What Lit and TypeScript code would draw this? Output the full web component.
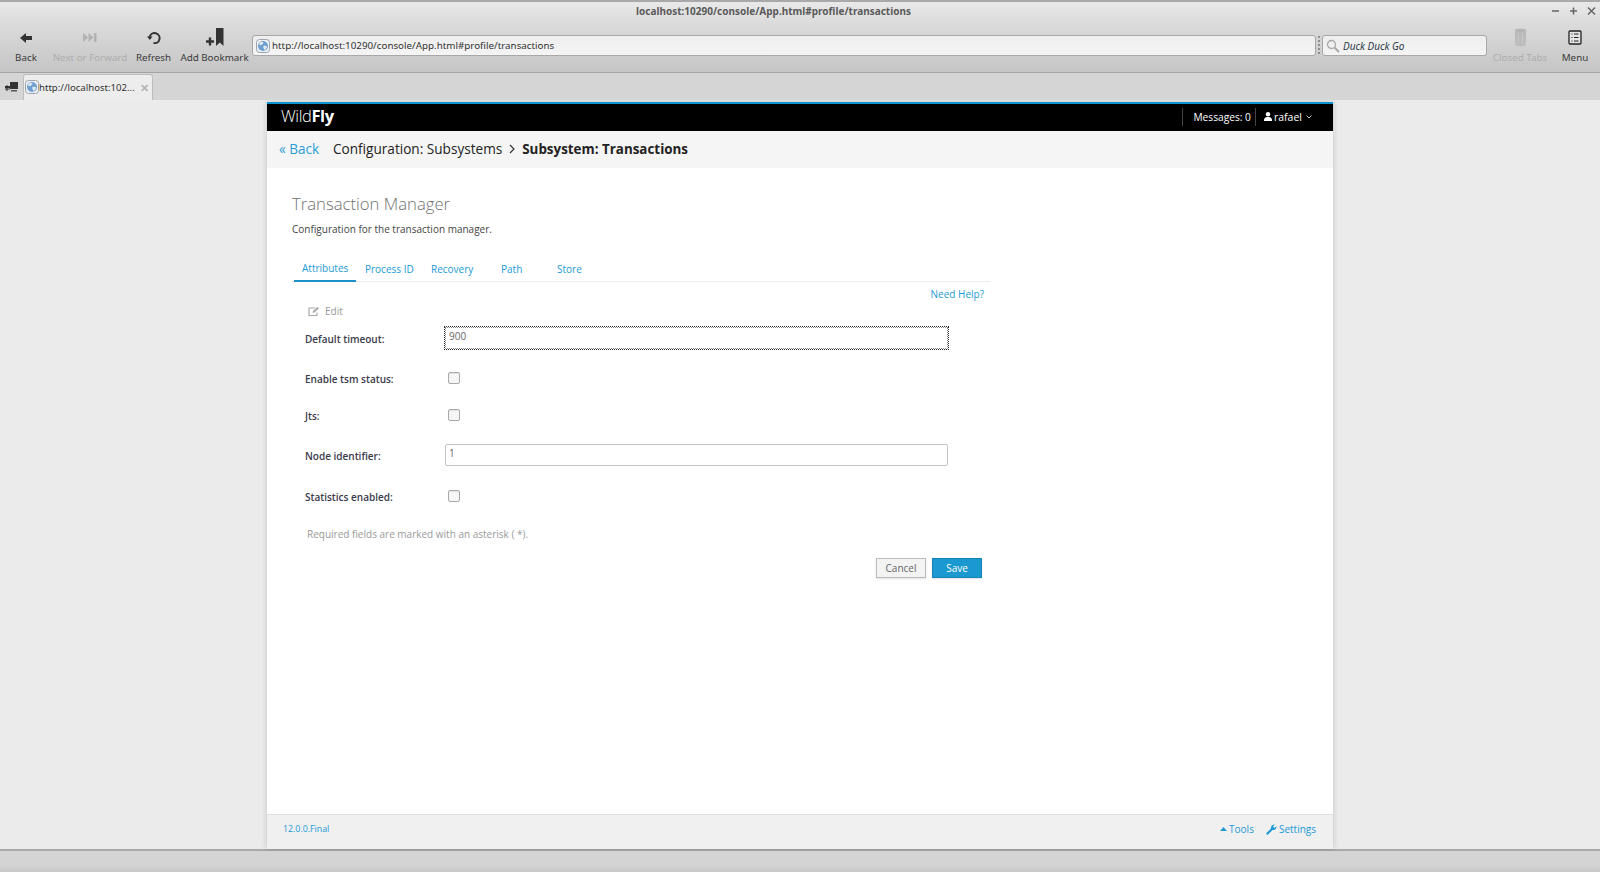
import { LitElement, html, css, svg } from "lit";
import { customElement } from "lit/decorators.js";

const globe = svg`<svg class="globe" width="14" height="14" viewBox="0 0 14 14"><rect x=".5" y=".5" width="13" height="13" rx="3" fill="#eef0f2" stroke="#9aa3ad"/><circle cx="7" cy="7" r="5" fill="#6f9fd0"/><path d="M4 3.500c1.500-.8 3-.5 3.500 0 .3 1-1 1-1.500 2-.6 1.200-1.500.6-2.500.6-.4-1 0-2 .5-2.600zM7.500 7c1.500-.5 3 0 3.500.8-.3 1.500-1.500 3-2.500 3.200-.5-1.200-1.700-2.500-1-4z" fill="#e4ecf3"/></svg>`;

@customElement("app-root")
export class AppRoot extends LitElement {
  static styles = css`
    :host { display: block; width: 1600px; height: 872px; overflow: hidden; font-family: "Open Sans", "Noto Sans", sans-serif; background: #ebebeb; }
    * { box-sizing: border-box; }
    svg { flex: none; }
    .shell { height: 872px; display: flex; flex-direction: column; }
    .chrome { height: 73px; background: linear-gradient(#e9e9e9 0, #dcdcdc 20px, #c4c4c4 72px); border-top: 2px solid #a9a9a9; border-bottom: 1px solid #a4a4a4; position: relative; font-family: "Noto Sans", sans-serif; flex: none; }
    .title { height: 19px; text-align: center; font-size: 10px; line-height: 19px; font-weight: 700; color: #5a5a5a; padding-right: 53px; }
    .wm { position: absolute; right: 2px; top: 3px; display: flex; gap: 6px; }
    .toolbar { display: flex; height: 50px; align-items: flex-start; padding-top: 4px; position: relative; }
    .tool { display: flex; flex-direction: column; align-items: center; font-size: 9.800px; color: #3a3a3a; height: 44px; line-height: 15px; white-space: nowrap; flex: none; }
    .tool.dis { color: #adadad; }
    .tool .ico { height: 25px; display: flex; align-items: center; justify-content: center; }
    .back { width: 26px; margin-left: 13px; }
    .next { width: 76px; margin-left: 13px; }
    .refresh { width: 37px; margin-left: 7px; }
    .addbm { width: 69px; margin-left: 8px; }
    .field { height: 21px; margin-top: 10px; background: linear-gradient(#eee, #f4f4f4); border: 1px solid #a8a8a8; border-radius: 3px; display: flex; align-items: center; font-size: 10px; color: #333; }
    .url { width: 1064px; margin-left: 3px; padding-left: 3px; gap: 2px; flex: none; font-size: 9.800px; }
    .grip { width: 6px; display: flex; flex-direction: column; gap: 2px; align-items: center; margin-top: 11px; height: 20px; flex: none; }
    .grip i { width: 2px; height: 2px; background: #8e8e8e; }
    .search { width: 165px; padding-left: 3px; gap: 3px; font-style: italic; color: #2c3a48; flex: none; }
    .closed { width: 58px; margin-left: 4px; }
    .menu { width: 30px; margin-left: 11px; }
    .tabbar { height: 27px; background: #d5d5d5; display: flex; align-items: flex-end; flex: none; position: relative; }
    .tabicon { width: 23px; height: 26px; display: flex; align-items: center; justify-content: center; }
    .tab { width: 130px; height: 26px; background: #ededed; border: 1px solid #bdbdbd; border-bottom: none; border-radius: 3px 3px 0 0; display: flex; align-items: center; font-size: 9.600px; color: #333; padding: 0 0 1px 1px; gap: 0; font-family: "Noto Sans", sans-serif; white-space: nowrap; }
    .tab .x { margin-left: 5px; color: #b5b5b5; font-size: 11px; font-weight: 700; }
    .body { flex: 1; display: flex; justify-content: center; background: #ebebeb; border-bottom: 2px solid #a9a9a9; padding-top: 2px; }
    .page { width: 1066px; background: #fff; display: flex; flex-direction: column; box-shadow: 0 0 6px rgba(0,0,0,.18); }
    .masthead { height: 29px; background: #000; border-top: 2.500px solid #0d92cf; color: #fff; display: flex; align-items: center; flex: none; font-size: 10.200px; padding-left: 14px; }
    .logo { font-size: 16.500px; font-weight: 300; letter-spacing: -.4px; line-height: 1; margin-top: -3px; }
    .logo b { font-weight: 700; }
    .mh-right { margin-left: auto; display: flex; align-items: center; height: 20px; margin: -2px 21px 0 auto; }
    .mh-item { border-left: 1px solid #444; height: 18px; display: flex; align-items: center; white-space: nowrap; }
    .msg { padding: 0 4px 0 10px; }
    .usr { padding-left: 8px; gap: 2px; font-size: 10.500px; }
    .crumbs { height: 37px; background: #f5f5f5; display: flex; align-items: center; font-size: 13.600px; color: #222; flex: none; white-space: nowrap; padding-bottom: 2px; }
    .crumbs .bk { color: #2a9dd6; padding-left: 12px; width: 66px; }
    .crumbs .sep { margin: 0 7px; display: flex; }
    .crumbs b { font-weight: 700; font-size: 13.400px; }
    .content { flex: 1; padding: 25px 0 0 25px; }
    h1 { margin: 0; font-size: 16.700px; font-weight: 300; color: #707070; line-height: 22px; }
    .desc { font-size: 10px; color: #444; margin-top: 6px; line-height: 16px; }
    .tabs { display: flex; width: 699px; margin-top: 16px; border-bottom: 1px solid #ececec; height: 29px; font-size: 10px; color: #1c9ad6; position: relative; }
    .tabs span { position: absolute; bottom: 5px; white-space: nowrap; line-height: 14px; }
    .tabs .on { left: 2px; bottom: -1px; width: 62px; height: 28px; padding: 7px 0 0 8px; border-bottom: 2px solid #1c91c9; color: #1c9ad6; }
    .pane { width: 699px; }
    .help { text-align: right; font-size: 10px; color: #1c9ad6; padding-right: 7px; line-height: 14px; margin-top: 5px; }
    .edit { display: flex; align-items: center; gap: 5px; margin: 3px 0 0 16px; font-size: 10px; color: #999; height: 14px; }
    .form { margin: 9px 0 0 13px; display: grid; grid-template-columns: 140px 503px; align-items: center; font-size: 10px; color: #333; }
    .form label { line-height: 14px; font-weight: 600; color: #3a3a4a; padding-top: 2px; }
    .inp { height: 22px; border: 1px solid #c4c4c4; border-radius: 2px; padding: 0 3px; line-height: 17px; color: #666; background: #fff; }
    .inp.focus { outline: 1px dotted #222; border: 1px dotted #888; border-radius: 0; }
    .cb { width: 12px; height: 12px; border: 1px solid #a9a9a9; border-radius: 2px; margin-left: 3px; background: #f6f6f6; box-shadow: inset 0 1px 1px rgba(0,0,0,.08); }
    .sp { grid-column: 1 / 3; }
    .req { margin: 23px 0 0 15px; font-size: 10px; color: #9a9a9a; line-height: 14px; }
    .btns { display: flex; justify-content: flex-end; gap: 6px; margin-top: 17px; padding-right: 9px; }
    .btn { width: 50px; height: 20px; font-size: 10px; display: flex; align-items: center; justify-content: center; }
    .cancel { background: #f3f3f3; border: 1px solid #bbb; color: #666; box-shadow: 0 1px 2px rgba(0,0,0,.12); }
    .save { background: #1a98d0; border: 1px solid #1585b8; color: #fff; box-shadow: 0 1px 2px rgba(0,0,0,.12); }
    .foot { height: 35px; background: #f0f0f0; border-top: 1px solid #e0e0e0; display: flex; align-items: center; padding: 0 17px 6px 16px; font-size: 10px; color: #1c9ad6; flex: none; }
    .foot .ver { font-size: 8.800px; }
    .foot .r { margin-left: auto; display: flex; gap: 12px; }
    .foot .r span { display: flex; align-items: center; gap: 2px; }
    .status { height: 21px; background: linear-gradient(#d4d4d4, #d4d4d4 70%, #c8c8c8); flex: none; }
  `;

  render() {
    return html`<div class="shell">
      <div class="chrome">
        <div class="title">localhost:10290/console/App.html#profile/transactions</div>
        <div class="wm">
          <svg width="12" height="12" viewBox="0 0 12 12"><path d="M2 6h7" stroke="#666" stroke-width="1.500"/></svg>
          <svg width="12" height="12" viewBox="0 0 12 12"><path d="M2 6h7M5.500 2.500v7" stroke="#666" stroke-width="1.500"/></svg>
          <svg width="12" height="12" viewBox="0 0 12 12"><path d="M2 2.500l7 7M9 2.500l-7 7" stroke="#666" stroke-width="1.500"/></svg>
        </div>
        <div class="toolbar">
          <div class="tool back"><div class="ico"><svg width="12" height="10" viewBox="0 0 12 10"><path d="M0 5l6-5v3h6v4H6v3z" fill="#333"/></svg></div>Back</div>
          <div class="tool next dis"><div class="ico"><svg width="14" height="9" viewBox="0 0 14 9"><path d="M0 0l5 4.500L0 9zM5.500 0l5 4.500L5.500 9zM11 0h2.500v9H11z" fill="#b2b2b2"/></svg></div>Next or Forward</div>
          <div class="tool refresh"><div class="ico"><svg width="14" height="13" viewBox="0 0 14 13"><path d="M2.700 6A5 5 0 1 1 6.500 12" fill="none" stroke="#333" stroke-width="2"/><path d="M0 5.500h5.600L2.800 9z" fill="#333"/></svg></div>Refresh</div>
          <div class="tool addbm"><div class="ico"><svg width="18" height="19" viewBox="0 0 18 19"><path d="M10 0h7.500v18l-3.700-3.500L10 18z" fill="#333"/><path d="M0 13.500h8M4 9.500v8" stroke="#333" stroke-width="2.400"/></svg></div>Add Bookmark</div>
          <div class="field url">${globe}<span>http://localhost:10290/console/App.html#profile/transactions</span></div>
          <div class="grip"><i></i><i></i><i></i><i></i><i></i></div>
          <div class="field search"><svg width="14" height="14" viewBox="0 0 14 14"><circle cx="5.500" cy="5.500" r="4" fill="none" stroke="#a8a8a8" stroke-width="1.300"/><path d="M8.500 8.500l4.500 4.500" stroke="#a8a8a8" stroke-width="2"/></svg><span>Duck Duck Go</span></div>
          <div class="tool closed dis"><div class="ico"><svg width="13" height="19" viewBox="0 0 13 20"><ellipse cx="6.500" cy="2.500" rx="6" ry="2" fill="#b5b5b5"/><path d="M.5 3c1 1.500 11 1.500 12 0l-.6 15c-1 2-9.800 2-10.800 0z" fill="#bbb"/><path d="M4.500 6v11M8.500 6v11" stroke="#c9c9c9"/></svg></div>Closed Tabs</div>
          <div class="tool menu"><div class="ico"><svg width="14" height="15" viewBox="0 0 14 15"><rect x="1" y="1" width="12" height="13" rx="1" fill="#e4e4e4" stroke="#222" stroke-width="1.300"/><path d="M3.500 4h1M6 4h4.500M3.500 7.500h1M6 7.500h4.500M3.500 11h1M6 11h4.500" stroke="#222" stroke-width="1.200"/></svg></div>Menu</div>
        </div>
      </div>
      <div class="tabbar">
        <div class="tabicon"><svg width="13" height="10" viewBox="0 0 13 10"><rect x="5" y="0" width="8" height="7" fill="#333"/><rect x="0" y="4" width="5" height="2" fill="#333"/><path d="M2 3v6M0 7h5" stroke="#333"/><rect x="6" y="8" width="6" height="1.500" fill="#555"/></svg></div>
        <div class="tab">${globe}<span>http://localhost:102...</span><span class="x">✕</span></div>
      </div>
      <div class="body">
        <div class="page">
          <div class="masthead">
            <div class="logo">Wild<b>Fly</b></div>
            <div class="mh-right">
              <div class="mh-item msg">Messages: 0</div>
              <div class="mh-item usr"><svg width="8" height="9" viewBox="0 0 8 9"><circle cx="4" cy="2.300" r="2.200" fill="#fff"/><path d="M0 9c0-3 1-4 4-4s4 1 4 4z" fill="#fff"/></svg><span>rafael</span><svg style="margin-left:2px" width="6" height="4" viewBox="0 0 6 4"><path d="M.5.500L3 3 5.500.5" fill="none" stroke="#ccc"/></svg></div>
            </div>
          </div>
          <div class="crumbs"><span class="bk">« Back</span><span>Configuration: Subsystems</span><span class="sep"><svg width="6" height="10" viewBox="0 0 6 10"><path d="M1 1l4 4-4 4" fill="none" stroke="#333" stroke-width="1.200"/></svg></span><b>Subsystem: Transactions</b></div>
          <div class="content">
            <h1>Transaction Manager</h1>
            <div class="desc">Configuration for the transaction manager.</div>
            <div class="pane">
              <div class="tabs">
                <span class="on">Attributes</span>
                <span style="left:73px">Process ID</span>
                <span style="left:139px">Recovery</span>
                <span style="left:209px">Path</span>
                <span style="left:265px">Store</span>
              </div>
              <div class="help">Need Help?</div>
              <div class="edit"><svg width="12" height="11" viewBox="0 0 12 11"><path d="M9 6.500V9.500H1V2h6" fill="none" stroke="#aaa" stroke-width="1.200"/><path d="M4.500 7l.5-2L9.500.8l1.500 1.500L6.500 6.500z" fill="#aaa"/></svg>Edit</div>
              <div class="form">
                <label>Default timeout:</label><div class="inp focus">900</div>
                <div class="sp" style="height:21px"></div>
                <label>Enable tsm status:</label><div class="cb"></div>
                <div class="sp" style="height:21px"></div>
                <label>Jts:</label><div class="cb"></div>
                <div class="sp" style="height:21px"></div>
                <label>Node identifier:</label><div class="inp">1</div>
                <div class="sp" style="height:22px"></div>
                <label>Statistics enabled:</label><div class="cb"></div>
              </div>
              <div class="req">Required fields are marked with an asterisk ( *).</div>
              <div class="btns"><div class="btn cancel">Cancel</div><div class="btn save">Save</div></div>
            </div>
          </div>
          <div class="foot">
            <span class="ver">12.0.0.Final</span>
            <div class="r">
              <span><svg width="7" height="4" viewBox="0 0 7 4"><path d="M0 4l3.500-4L7 4z" fill="#1c9ad6"/></svg>Tools</span>
              <span><svg width="11" height="11" viewBox="0 0 11 11"><path d="M0 9.500L5 4.500C4.500 2.500 6 .5 9 .5L7 2.500l1.500 1.500L10.500 2c.3 3-2 4.500-4 4L1.500 11z" fill="#1c9ad6"/></svg>Settings</span>
            </div>
          </div>
        </div>
      </div>
      <div class="status"></div>
    </div>`;
  }
}
